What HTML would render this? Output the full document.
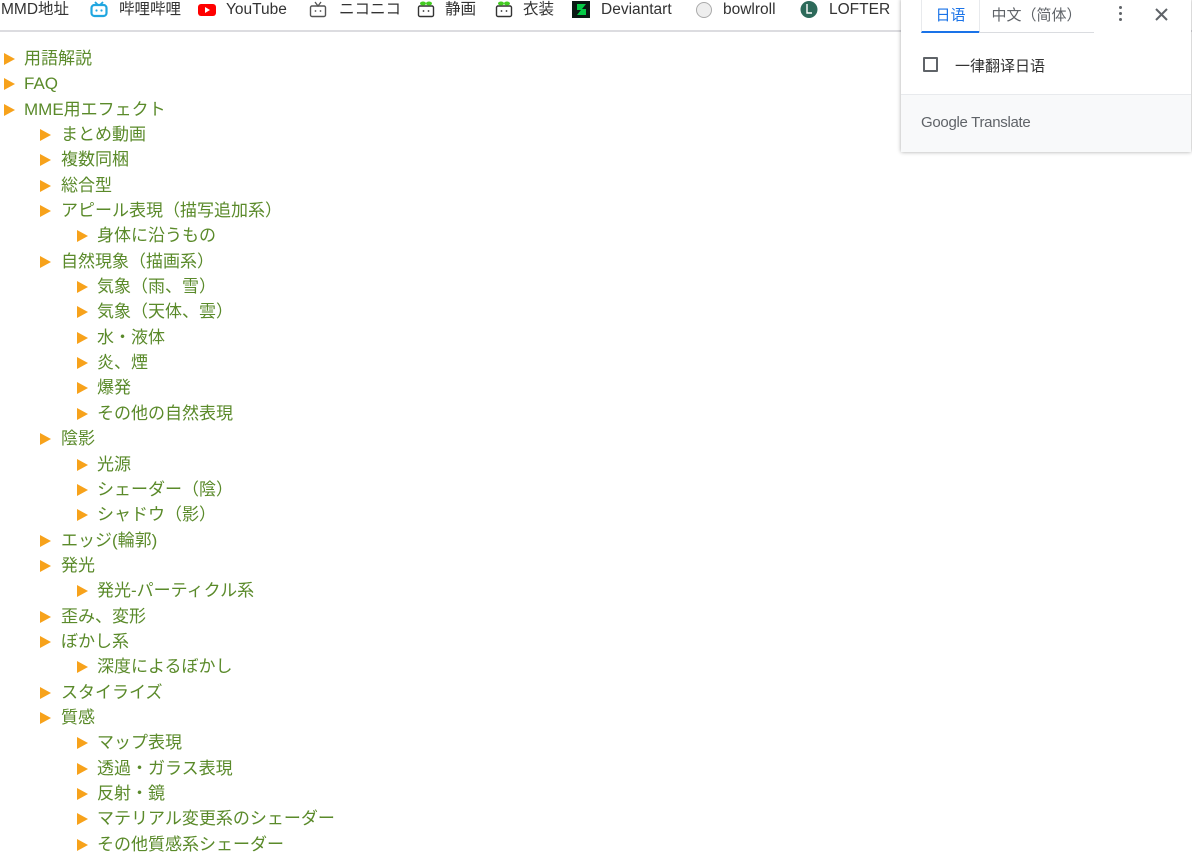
<!DOCTYPE html>
<html><head><meta charset="utf-8"><style>
body{margin:0;width:1192px;height:859px;overflow:hidden;background:#fff;font-family:"Liberation Sans","Noto Sans CJK JP",sans-serif;position:relative}
.bar{height:30px;border-bottom:2px solid #dcdce0;font-size:15.5px;color:#333;white-space:nowrap;position:relative}
.bar span{position:absolute;top:0;line-height:20px}
.ic{position:absolute;top:1px;width:18px;height:17px}
ul{list-style:none;margin:0;padding:0}
.list{position:absolute;top:46px;left:0;font-size:17px;color:#5a8a2a}
.list li{height:25.35px;line-height:25.35px;position:relative;white-space:nowrap}
.list li:before{content:"";position:absolute;left:-20px;top:7px;border-left:11px solid #f7a21b;border-top:6px solid transparent;border-bottom:6px solid transparent}
.l1{padding-left:24px}.l2{padding-left:61px}.l3{padding-left:97px}
.l1:before{left:4px!important}.l2:before{left:40px!important}.l3:before{left:77px!important}
.pop{position:absolute;left:901px;top:-2px;width:290px;height:153px;background:#fff;box-shadow:0 1px 4px rgba(0,0,0,.35);font-family:"Liberation Sans","Noto Sans CJK SC",sans-serif}
</style></head><body>
<div class="bar">
<span style="left:1px">MMD地址</span>
<svg class="ic" style="left:90px" viewBox="0 0 18 17"><rect x="1.5" y="4" width="15" height="11" rx="3" fill="none" stroke="#20a6e0" stroke-width="2.2"/><path d="M5 1l3 3M13 1l-3 3" stroke="#20a6e0" stroke-width="1.8"/><circle cx="6.5" cy="9.5" r="1.1" fill="#20a6e0"/><circle cx="11.5" cy="9.5" r="1.1" fill="#20a6e0"/></svg>
<span style="left:119px">哔哩哔哩</span>
<svg class="ic" style="left:198px" viewBox="0 0 18 17"><rect x="0" y="3" width="18" height="12" rx="3" fill="#f00"/><path d="M7 6v6l5-3z" fill="#fff"/></svg>
<span style="left:226px">YouTube</span>
<svg class="ic" style="left:309px" viewBox="0 0 18 17"><rect x="1.5" y="5" width="15" height="10.5" rx="1.5" fill="none" stroke="#555" stroke-width="1.4"/><path d="M6 1l3 4 3-4" stroke="#555" fill="none" stroke-width="1.3"/><circle cx="6.5" cy="10" r=".9" fill="#555"/><circle cx="11.5" cy="10" r=".9" fill="#555"/></svg>
<span style="left:339px">ニコニコ</span>
<svg class="ic" style="left:417px" viewBox="0 0 18 17"><rect x="1.5" y="5" width="15" height="10.5" rx="1.5" fill="none" stroke="#333" stroke-width="1.4"/><ellipse cx="6" cy="2.5" rx="3" ry="2" fill="#4c2"/><ellipse cx="12" cy="2.5" rx="3" ry="2" fill="#4c2"/><circle cx="6.5" cy="10" r=".9" fill="#333"/><circle cx="11.5" cy="10" r=".9" fill="#333"/></svg>
<span style="left:445px">静画</span>
<svg class="ic" style="left:495px" viewBox="0 0 18 17"><rect x="1.5" y="5" width="15" height="10.5" rx="1.5" fill="none" stroke="#333" stroke-width="1.4"/><ellipse cx="6" cy="2.5" rx="3" ry="2" fill="#4c2"/><ellipse cx="12" cy="2.5" rx="3" ry="2" fill="#4c2"/><circle cx="6.5" cy="10" r=".9" fill="#333"/><circle cx="11.5" cy="10" r=".9" fill="#333"/></svg>
<span style="left:523px">衣装</span>
<svg class="ic" style="left:572px" viewBox="0 0 18 17"><rect width="18" height="17" fill="#0a1a14"/><path d="M5 3h9l-4 5h4v6H5l4-5H5z" fill="#05cc47"/></svg>
<span style="left:601px">Deviantart</span>
<svg class="ic" style="left:695px" viewBox="0 0 18 17"><circle cx="9" cy="9" r="7.5" fill="#eee" stroke="#aaa"/></svg>
<span style="left:723px">bowlroll</span>
<svg class="ic" style="left:800px" viewBox="0 0 18 17"><circle cx="9" cy="8.5" r="8.5" fill="#2d6a5a"/><path d="M7 3v9h5" stroke="#fff" fill="none" stroke-width="1.4"/></svg>
<span style="left:829px">LOFTER</span>
</div>
<ul class="list">
<li class="l1">用語解説</li><li class="l1">FAQ</li><li class="l1">MME用エフェクト</li>
<li class="l2">まとめ動画</li><li class="l2">複数同梱</li><li class="l2">総合型</li><li class="l2">アピール表現（描写追加系）</li>
<li class="l3">身体に沿うもの</li>
<li class="l2">自然現象（描画系）</li>
<li class="l3">気象（雨、雪）</li><li class="l3">気象（天体、雲）</li><li class="l3">水・液体</li><li class="l3">炎、煙</li><li class="l3">爆発</li><li class="l3">その他の自然表現</li>
<li class="l2">陰影</li>
<li class="l3">光源</li><li class="l3">シェーダー（陰）</li><li class="l3">シャドウ（影）</li>
<li class="l2">エッジ(輪郭)</li><li class="l2">発光</li>
<li class="l3">発光-パーティクル系</li>
<li class="l2">歪み、変形</li><li class="l2">ぼかし系</li>
<li class="l3">深度によるぼかし</li>
<li class="l2">スタイライズ</li><li class="l2">質感</li>
<li class="l3">マップ表現</li><li class="l3">透過・ガラス表現</li><li class="l3">反射・鏡</li><li class="l3">マテリアル変更系のシェーダー</li><li class="l3">その他質感系シェーダー</li>
</ul>
<div class="pop">
<div style="position:absolute;left:20px;top:2px;width:57px;height:31px;border-bottom:2px solid #1a73e8;border-left:1px solid #e8eaed;border-right:1px solid #e8eaed;color:#1a73e8;font-size:15px;text-align:center;line-height:32px">日语</div>
<div style="position:absolute;left:78px;top:2px;width:115px;height:32px;border-bottom:1px solid #dadce0;color:#5f6368;font-size:15px;text-align:center;line-height:32px">中文（简体）</div>
<div style="position:absolute;left:218px;top:8px;width:4px;"><div style="width:3px;height:3px;background:#5f6368;border-radius:50%;margin-bottom:3px"></div><div style="width:3px;height:3px;background:#5f6368;border-radius:50%;margin-bottom:3px"></div><div style="width:3px;height:3px;background:#5f6368;border-radius:50%"></div></div>
<svg style="position:absolute;left:254px;top:10px" width="13" height="13" viewBox="0 0 13 13"><path d="M1 1l11 11M12 1L1 12" stroke="#5f6368" stroke-width="2"/></svg>
<div style="position:absolute;left:22px;top:59px;width:11px;height:11px;border:2px solid #5f6368;border-radius:1px"></div>
<div style="position:absolute;left:54px;top:57px;font-size:15px;color:#333">一律翻译日语</div>
<div style="position:absolute;left:0;top:96px;width:290px;height:57px;background:#f8f9fa;border-top:1px solid #e8eaed"></div>
<div style="position:absolute;left:20px;top:116px;font-size:15px;color:#5f6368;letter-spacing:-0.3px">Google Translate</div>
</div>
</body></html>
